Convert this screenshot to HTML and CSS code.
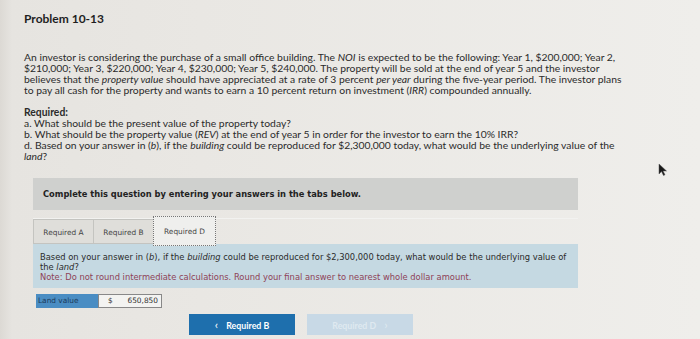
FILE: index.html
```html
<!DOCTYPE html>
<html>
<head>
<meta charset="utf-8">
<link rel="stylesheet" href="styles.css">
</head>
<body>
<div class="page">
  <h1 class="title">Problem 10-13</h1>
  <p class="intro">An investor is considering the purchase of a small office building. The <i>NOI</i> is expected to be the following: Year 1, $200,000; Year 2,<br>$210,000; Year 3, $220,000; Year 4, $230,000; Year 5, $240,000. The property will be sold at the end of year 5 and the investor<br>believes that the <i>property value</i> should have appreciated at a rate of 3 percent <i>per year</i> during the five-year period. The investor plans<br>to pay all cash for the property and wants to earn a 10 percent return on investment (<i>IRR</i>) compounded annually.</p>
  <div class="required">
    <div class="req-head">Required:</div>
    <div>a. What should be the present value of the property today?</div>
    <div>b. What should be the property value (<i>REV</i>) at the end of year 5 in order for the investor to earn the 10% IRR?</div>
    <div>d. Based on your answer in (<i>b</i>), if the <i>building</i> could be reproduced for $2,300,000 today, what would be the underlying value of the<br><i>land</i>?</div>
  </div>
  <div class="widget">
    <div class="instr">Complete this question by entering your answers in the tabs below.</div>
    <div class="tabs">
      <div class="tab">Required A</div>
      <div class="tab">Required B</div>
      <div class="tab active">Required D</div>
    </div>
    <div class="question">
      <div>Based on your answer in (<i>b</i>), if the <i>building</i> could be reproduced for $2,300,000 today, what would be the underlying value of<br>the <i>land</i>?</div>
      <div class="note">Note: Do not round intermediate calculations. Round your final answer to nearest whole dollar amount.</div>
    </div>
    <div class="answer-row">
      <div class="label">Land value</div>
      <div class="input"><span class="cur">$</span><span class="val">650,850</span></div>
    </div>
    <div class="nav">
      <div class="btn prev"><span class="chev">&lsaquo;</span> Required B</div>
      <div class="btn next">Required D <span class="chev">&rsaquo;</span></div>
    </div>
  </div>
  <svg class="cursor" width="9" height="13" viewBox="0 0 9 13"><path d="M1 1 L1 11 L3.5 8.5 L5.5 12.5 L7 11.8 L5 8 L8.5 8 Z" fill="#1a1a1a" stroke="#555" stroke-width="0.5"/></svg>
</div>
</body>
</html>
```

FILE: styles.css
```css
html, body {
  margin: 0;
  padding: 0;
}
body {
  width: 700px;
  height: 339px;
  overflow: hidden;
  background: linear-gradient(90deg, #dcd9d4 0px, #e6e4e0 12px, #e9e7e3 200px, #efeeeb 700px);
}
.page {
  position: relative;
  height: 339px;
  padding: 12px 0 0 24px;
  box-sizing: border-box;
  font-family: Lato, "Open Sans", sans-serif;
  color: #2b2b2b;
}
.title {
  margin: 0;
  font-size: 12px;
  line-height: 14px;
  font-weight: 700;
  color: #1f1f1f;
}
.intro {
  margin: 26px 0 0 0;
  font-size: 10.35px;
  line-height: 11px;
  white-space: nowrap;
}
.required {
  margin-top: 11px;
  font-size: 10.35px;
  line-height: 11px;
  white-space: nowrap;
}
.req-head {
  font-weight: 700;
}
.widget {
  margin: 16px 0 0 9px;
  width: 545px;
  font-family: "DejaVu Sans", Verdana, sans-serif;
}
.instr {
  background: #cfd0ce;
  height: 32px;
  padding-left: 10px;
  font-size: 8.3px;
  font-weight: 700;
  line-height: 32px;
  color: #222;
}
.tabs {
  margin-top: 8px;
  display: flex;
  height: 25px;
  border-top: 1px solid #f2f2f0;
}
.tab {
  width: 59px;
  border: 1px solid #c4c4c0;
  border-right: none;
  background: #dfdeda;
  font-size: 7.4px;
  line-height: 25px;
  text-align: center;
  color: #444;
}
.tab.active {
  width: 61px;
  background: #efefed;
  border: 1px dotted #777;
  margin-top: -3px;
  height: 28px;
  line-height: 30px;
}
.question {
  background: #c5d9e2;
  padding: 8px 8px 6px 7px;
  font-size: 8.35px;
  line-height: 10px;
  color: #2a2a2a;
  white-space: nowrap;
}
.note {
  color: #8e4257;
}
.answer-row {
  display: flex;
  margin: 6px 0 0 3px;
  height: 14px;
}
.label {
  width: 62px;
  background: #4a8dc3;
  color: #1d3b5c;
  font-size: 7.4px;
  line-height: 14px;
  padding-left: 2px;
  box-sizing: border-box;
}
.input {
  width: 64px;
  display: flex;
  justify-content: space-between;
  border: 1px solid #888;
  background: #f3f3f1;
  box-sizing: border-box;
  font-size: 7.4px;
  line-height: 12px;
  padding: 0 3px 0 9px;
  color: #333;
}
.nav {
  display: flex;
  gap: 12px;
  margin: 6px 0 0 156px;
}
.btn {
  width: 106px;
  height: 21px;
  line-height: 21px;
  text-align: center;
  font-family: Lato, "Open Sans", sans-serif;
  font-size: 8.8px;
  font-weight: 700;
  color: #fff;
}
.btn.prev {
  background: #1e6fad;
}
.btn.next {
  background: #c8d9e6;
  color: #dfe9f0;
}
.chev {
  font-size: 12px;
  font-weight: 400;
  margin-right: 6px;
}
.btn.next .chev {
  margin: 0 0 0 6px;
}
.cursor {
  position: absolute;
  left: 658px;
  top: 163px;
}
```
